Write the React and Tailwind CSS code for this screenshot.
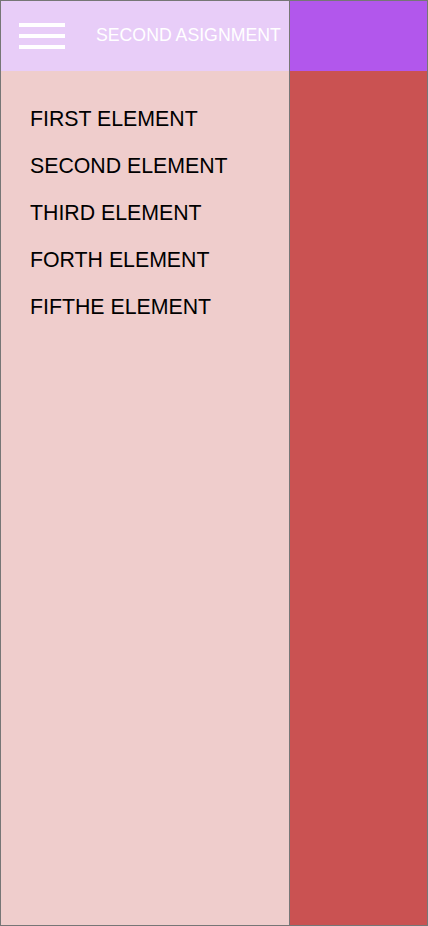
export default function App() {
  const items = ["FIRST ELEMENT", "SECOND ELEMENT", "THIRD ELEMENT", "FORTH ELEMENT", "FIFTHE ELEMENT"];
  return (
    <div className="w-[428px] h-[926px] border border-[#767676] flex" style={{ fontFamily: '"Liberation Sans", Arial, sans-serif' }}>
      <div className="w-[289px] border-r border-[#767676] flex flex-col">
        <div className="h-[70px] bg-[#e8cdf8] flex items-center pl-[18px]">
          <div className="flex flex-col gap-[7px] w-[46px]">
            <div className="h-[4px] bg-white" />
            <div className="h-[4px] bg-white" />
            <div className="h-[4px] bg-white" />
          </div>
          <div className="ml-[31px] text-white text-[17.7px] leading-none">SECOND ASIGNMENT</div>
        </div>
        <div className="flex-1 bg-[#efcdcc] pl-[29px] pt-[25px]">
          {items.map((t) => (
            <div key={t} className="text-[21.3px] leading-[47px] text-black">{t}</div>
          ))}
        </div>
      </div>
      <div className="flex-1 flex flex-col">
        <div className="h-[70px] bg-[#b257ec]" />
        <div className="flex-1 bg-[#ca5252]" />
      </div>
    </div>
  );
}
